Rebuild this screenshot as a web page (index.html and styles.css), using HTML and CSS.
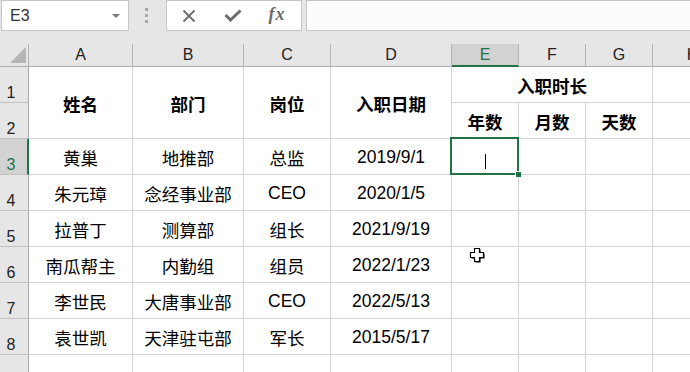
FILE: index.html
```html
<!DOCTYPE html>
<html lang="zh-CN">
<head>
  <meta charset="UTF-8" />
  <title>入职时长</title>
  <link rel="stylesheet" href="styles.css">
</head>
<body>

  <div class="toolbar">
    <div class="formula-bar">
      <div class="name-box">
        <span>E3</span>
        <span class="drop"></span>
      </div>
      <div class="grip"><i></i><i></i><i></i></div>
      <div class="fx-buttons">
        <span class="fx-btn">
          <svg width="14" height="14" viewBox="0 0 14 14"><path d="M1.5 1.5 L12.5 12.5 M12.5 1.5 L1.5 12.5" stroke="#6b6b6b" stroke-width="1.8" fill="none"/></svg>
        </span>
        <span class="fx-btn">
          <svg width="18" height="13" viewBox="0 0 18 13"><path d="M1.5 6 L6.5 11 L16.5 1.5" stroke="#6b6b6b" stroke-width="3" fill="none"/></svg>
        </span>
        <span class="fx-btn fx">fx</span>
      </div>
      <div class="formula-input"></div>
    </div>
  </div>

  <div class="sheet">
    <!-- column headers -->
    <div class="cell hd corner"><span class="tri"></span></div>
    <div class="cell hd">A</div>
    <div class="cell hd">B</div>
    <div class="cell hd">C</div>
    <div class="cell hd">D</div>
    <div class="cell hd on">E</div>
    <div class="cell hd">F</div>
    <div class="cell hd">G</div>
    <div class="cell hd">H</div>

    <!-- rows 1-2 -->
    <div class="cell rh">1</div>
    <div class="cell title tall">姓名</div>
    <div class="cell title tall">部门</div>
    <div class="cell title tall">岗位</div>
    <div class="cell title tall">入职日期</div>
    <div class="cell title wide">入职时长</div>
    <div class="cell"></div>

    <div class="cell rh">2</div>
    <div class="cell title">年数</div>
    <div class="cell title">月数</div>
    <div class="cell title">天数</div>
    <div class="cell"></div>

    <!-- data -->
    <div class="cell rh on">3</div>
    <div class="cell">黄巢</div>
    <div class="cell">地推部</div>
    <div class="cell">总监</div>
    <div class="cell">2019/9/1</div>
    <div class="cell sel"><span class="caret"></span></div>
    <div class="cell"></div>
    <div class="cell"></div>
    <div class="cell"></div>

    <div class="cell rh">4</div>
    <div class="cell">朱元璋</div>
    <div class="cell">念经事业部</div>
    <div class="cell">CEO</div>
    <div class="cell">2020/1/5</div>
    <div class="cell"></div>
    <div class="cell"></div>
    <div class="cell"></div>
    <div class="cell"></div>

    <div class="cell rh">5</div>
    <div class="cell">拉普丁</div>
    <div class="cell">测算部</div>
    <div class="cell">组长</div>
    <div class="cell">2021/9/19</div>
    <div class="cell"></div>
    <div class="cell"></div>
    <div class="cell"></div>
    <div class="cell"></div>

    <div class="cell rh">6</div>
    <div class="cell">南瓜帮主</div>
    <div class="cell">内勤组</div>
    <div class="cell">组员</div>
    <div class="cell">2022/1/23</div>
    <div class="cell"></div>
    <div class="cell"></div>
    <div class="cell"></div>
    <div class="cell"></div>

    <div class="cell rh">7</div>
    <div class="cell">李世民</div>
    <div class="cell">大唐事业部</div>
    <div class="cell">CEO</div>
    <div class="cell">2022/5/13</div>
    <div class="cell"></div>
    <div class="cell"></div>
    <div class="cell"></div>
    <div class="cell"></div>

    <div class="cell rh">8</div>
    <div class="cell">袁世凯</div>
    <div class="cell">天津驻屯部</div>
    <div class="cell">军长</div>
    <div class="cell">2015/5/17</div>
    <div class="cell"></div>
    <div class="cell"></div>
    <div class="cell"></div>
    <div class="cell"></div>

    <!-- row 9, cut off by the window -->
    <div class="cell rh"></div>
    <div class="cell"></div>
    <div class="cell"></div>
    <div class="cell"></div>
    <div class="cell"></div>
    <div class="cell"></div>
    <div class="cell"></div>
    <div class="cell"></div>
    <div class="cell"></div>
  </div>

  <!-- mouse pointer over the sheet -->
  <svg class="pointer" width="17" height="17" viewBox="0 0 17 17">
    <path d="M6.5 2.5 H11.5 V6.5 H15.5 V11.5 H11.5 V15.5 H6.5 V11.5 H2.5 V6.5 H6.5 Z" fill="#000"/>
    <path d="M5.5 1.5 H10.5 V5.5 H14.5 V10.5 H10.5 V14.5 H5.5 V10.5 H1.5 V5.5 H5.5 Z" fill="#fff" stroke="#000" stroke-width="1.2"/>
  </svg>

</body>
</html>
```

FILE: styles.css
```css
body {
  margin: 0;
  width: 690px;
  height: 372px;
  overflow: hidden;
  position: relative;
  background: #fff;
  font-family: "Liberation Sans", "Noto Sans CJK SC", sans-serif;
}

/* formula bar */
.toolbar {
  background: #e6e6e6;
  height: 44px;
  box-sizing: border-box;
  padding-bottom: 13px;
}

.formula-bar {
  display: flex;
  height: 31px;
}

.name-box {
  margin-left: 1px;
  width: 128px;
  box-sizing: border-box;
  background: #fff;
  border: 1px solid #c6c6c6;
  display: flex;
  align-items: center;
  justify-content: space-between;
  padding: 0 8px 0 8px;
  font-size: 16px;
  color: #333;
}

.name-box .drop {
  width: 0;
  height: 0;
  border-left: 4px solid transparent;
  border-right: 4px solid transparent;
  border-top: 4px solid #7a7a7a;
}

.grip {
  width: 37px;
  box-sizing: border-box;
  padding-right: 3px;
  display: flex;
  flex-direction: column;
  align-items: center;
  justify-content: center;
  gap: 3px;
}

.grip i {
  display: block;
  width: 3px;
  height: 3px;
  background: #a8a8a8;
}

.fx-buttons {
  width: 136px;
  box-sizing: border-box;
  border: 1px solid #c6c6c6;
  background: #fff;
  display: flex;
}

.fx-btn {
  width: 44px;
  display: flex;
  align-items: center;
  justify-content: center;
}

.fx-btn.fx {
  font-family: "Liberation Serif", serif;
  font-style: italic;
  font-weight: bold;
  font-size: 18px;
  letter-spacing: 1px;
  color: #6b6b6b;
  padding-bottom: 2px;
}

.formula-input {
  flex: 1;
  margin-left: 4px;
  border: 1px solid #c6c6c6;
  border-right: none;
  background: #fcfcfc;
}

/* grid */
.sheet {
  display: grid;
  grid-template-columns: 29px 104px 111px 87px 121px 67px 67px 67px 80px;
  grid-template-rows: 23px repeat(9, 36px);
}

.cell {
  box-sizing: border-box;
  border-right: 1px solid #d4d4d4;
  border-bottom: 1px solid #d4d4d4;
  display: flex;
  align-items: center;
  justify-content: center;
  font-size: 17.5px;
  color: #000;
  padding-top: 1px;
}

.hd {
  background: #e6e6e6;
  border-right-color: #b4b4b4;
  border-bottom-color: #ababab;
  font-size: 16px;
  color: #222;
  padding-top: 0;
}

.hd.on {
  background: #d2d2d2;
  color: #217346;
  border-bottom: 2px solid #217346;
}

.corner {
  align-items: flex-end;
  justify-content: flex-end;
  padding: 0 2px 3px 0;
}

.corner .tri {
  width: 0;
  height: 0;
  border-left: 16px solid transparent;
  border-bottom: 16px solid #b4b4b4;
}

.rh {
  background: #e6e6e6;
  border-right-color: #ababab;
  border-bottom-color: #c0c0c0;
  align-items: flex-end;
  padding: 0 6px 1px 0;
  font-size: 16px;
  line-height: 1;
  color: #222;
}

.rh.on {
  background: #d2d2d2;
  color: #217346;
  border-right: 2px solid #217346;
  padding-right: 5px;
}

.title {
  font-weight: bold;
}

.tall {
  grid-row: span 2;
}

.wide {
  grid-column: span 3;
}

/* active cell */
.sel {
  position: relative;
}

.sel::after {
  content: "";
  position: absolute;
  left: -2px;
  top: -2px;
  right: -1px;
  bottom: -1px;
  border: 2px solid #217346;
}

.sel::before {
  content: "";
  position: absolute;
  right: -3px;
  bottom: -3px;
  width: 5px;
  height: 5px;
  background: #217346;
  box-shadow: -1px -1px 0 #fff;
  z-index: 1;
}

.caret {
  width: 1px;
  height: 15px;
  background: #000;
  margin-top: 8px;
}

.pointer {
  position: absolute;
  left: 469px;
  top: 247px;
}
```
